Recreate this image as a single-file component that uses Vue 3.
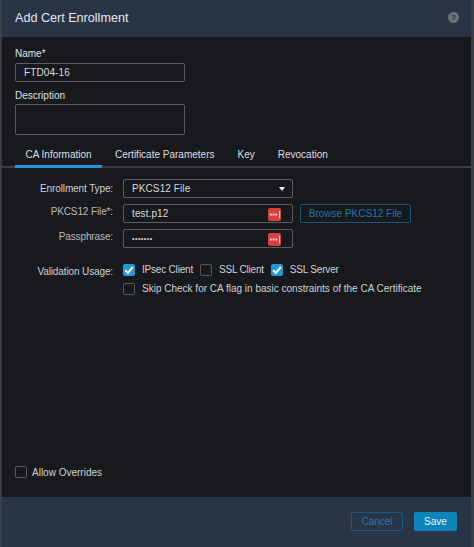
<script setup>
const tabs = ['CA Information', 'Certificate Parameters', 'Key', 'Revocation']
</script>

<template>
  <div class="page">
    <div class="modal">
      <header class="head">
        <span class="title">Add Cert Enrollment</span>
        <span class="help">?</span>
      </header>
      <main class="body">
        <div class="top">
          <label class="lab name-lab">Name*</label>
          <div class="field wide">FTD04-16</div>
          <label class="lab desc-lab">Description</label>
          <div class="field wide area"></div>
        </div>
        <nav class="tabs">
          <span v-for="(t, i) in tabs" :key="t" class="tab" :class="{ on: i === 0 }">{{ t }}</span>
        </nav>
        <section class="form">
          <div class="row r1">
            <span class="rl">Enrollment Type:</span>
            <div class="field ctl">PKCS12 File<span class="caret"></span></div>
          </div>
          <div class="row r2">
            <span class="rl up">PKCS12 File*:</span>
            <div class="field ctl">test.p12
              <span class="dots"><svg width="13" height="13" viewBox="0 0 14 14"><rect x="2" y="6" width="2" height="2" fill="#f6e4e4"/><rect x="5" y="6" width="2" height="2" fill="#f6e4e4"/><rect x="8" y="6" width="2" height="2" fill="#f6e4e4"/><rect x="12" y="3" width="1" height="8" fill="#f6e4e4"/></svg></span>
            </div>
            <button class="browse">Browse PKCS12 File</button>
          </div>
          <div class="row r3">
            <span class="rl up">Passphrase:</span>
            <div class="field ctl pw">•••••••
              <span class="dots"><svg width="13" height="13" viewBox="0 0 14 14"><rect x="2" y="6" width="2" height="2" fill="#f6e4e4"/><rect x="5" y="6" width="2" height="2" fill="#f6e4e4"/><rect x="8" y="6" width="2" height="2" fill="#f6e4e4"/><rect x="12" y="3" width="1" height="8" fill="#f6e4e4"/></svg></span>
            </div>
          </div>
          <div class="row r4">
            <span class="rl down">Validation Usage:</span>
            <div class="checks">
              <span class="box on"><svg width="12" height="12" viewBox="0 0 12 12"><path d="M2.2 6.2 L4.9 9 L9.8 3" fill="none" stroke="#fff" stroke-width="2"/></svg></span><span class="ck tight">IPsec Client</span>
              <span class="box"></span><span class="ck tight">SSL Client</span>
              <span class="box on"><svg width="12" height="12" viewBox="0 0 12 12"><path d="M2.2 6.2 L4.9 9 L9.8 3" fill="none" stroke="#fff" stroke-width="2"/></svg></span><span class="ck last">SSL Server</span>
            </div>
          </div>
          <div class="row r5">
            <span class="rl"></span>
            <div class="checks">
              <span class="box"></span><span class="ck">Skip Check for CA flag in basic constraints of the CA Certificate</span>
            </div>
          </div>
        </section>
        <div class="allow">
          <span class="box"></span><span class="ck">Allow Overrides</span>
        </div>
      </main>
      <footer class="foot">
        <button class="cancel">Cancel</button>
        <button class="save">Save</button>
      </footer>
    </div>
  </div>
</template>

<style>
html, body { margin: 0; background: #3b3e44; }
</style>

<style scoped>
.page {
  width: 474px;
  height: 547px;
  padding: 0 3px 0 2px;
  box-sizing: border-box;
  background: #3b3e44;
  font-family: "Liberation Sans", Arial, sans-serif;
  color: #d6d9dd;
  font-size: 10px;
  overflow: hidden;
}
.modal { height: 100%; display: flex; flex-direction: column; background: #17191d; }
.head {
  height: 37px;
  flex: none;
  box-sizing: border-box;
  background: #2a3447;
  display: flex;
  align-items: center;
  justify-content: space-between;
  padding: 0 12px 2px 13px;
}
.title { font-size: 12.6px; color: #e4e7ea; }
.help {
  width: 11px; height: 11px; border-radius: 50%;
  background: #6c7078; color: #33363c;
  font-size: 8px; font-weight: bold; line-height: 11px; text-align: center;
}
.body { flex: 1; display: flex; flex-direction: column; }
.top { padding: 10px 0 0 13px; }
.lab { display: block; line-height: 14px; color: #dfe2e5; }
.name-lab { margin-bottom: 2px; }
.desc-lab { margin-top: 7px; margin-bottom: 1px; }
.field {
  box-sizing: border-box;
  border: 1px solid #5a5d62;
  border-radius: 2px;
  color: #d6d9dd;
  background: #17191d;
  position: relative;
}
.wide { width: 170px; height: 19px; line-height: 17px; padding-left: 8px; letter-spacing: 0.1px; }
.area { height: 31px; }
.tabs {
  display: flex;
  height: 33px;
  box-sizing: border-box;
  border-bottom: 2px solid #3a3c41;
  padding-left: 13px;
}
.tab {
  height: 33px;
  box-sizing: border-box;
  line-height: 39px;
  color: #dcdfe2;
  margin-right: 23px;
}
.tab.on {
  width: 87px;
  text-align: center;
  margin-right: 13px;
  border-bottom: 3px solid #1d9ad6;
  line-height: 39px;
}
.form { padding-top: 11px; }
.row { display: flex; align-items: center; }
.r1, .r2, .r3 { height: 19px; margin-bottom: 6px; }
.rl {
  width: 111px; text-align: right; margin-right: 10px; color: #b9bcc1; flex: none;
  letter-spacing: -0.12px;
}
.r1 .rl, .r4 .rl { color: #cfd2d6; }
.up { padding-bottom: 4px; box-sizing: border-box; }
.down { padding-top: 4px; box-sizing: border-box; }
.ctl {
  width: 170px; height: 19px; line-height: 17px; padding-left: 8px;
  letter-spacing: 0.1px;
}
.pw { font-size: 7px; letter-spacing: 0.5px; }
.caret {
  position: absolute; right: 7px; top: 7px;
  border-left: 3px solid transparent; border-right: 3px solid transparent;
  border-top: 4px solid #eceef0;
}
.dots {
  position: absolute; right: 11px; top: 3px;
  width: 13px; height: 13px;
  background: #d93f3c;
  border-radius: 2px;
  display: block;
}
.dots svg { display: block; }
.browse {
  margin-left: 7px;
  width: 111px; height: 19px; padding: 0;
  background: transparent;
  border: 1px solid #155a78;
  border-radius: 2px;
  color: #1f7aa3;
  font: inherit;
}
.r4 { margin-top: 12px; height: 19px; }
.r5 { height: 19px; }
.checks { display: flex; align-items: center; }
.box {
  width: 12px; height: 12px; flex: none; box-sizing: border-box;
  border: 1px solid #55585d; border-radius: 2px;
  margin-right: 7px;
  display: block;
}
.box.on { background: #1e9bd8; border-color: #1e9bd8; }
.box.on svg { display: block; margin: -1px; }
.ck { color: #cfd2d6; }
.tight { letter-spacing: -0.2px; margin-right: 7px; }
.last { letter-spacing: -0.2px; }
.allow { margin-top: auto; padding: 0 0 19px 13px; display: flex; align-items: center; }
.allow .box { margin-right: 5px; }
.foot {
  height: 50px;
  flex: none;
  box-sizing: border-box;
  background: #2a3447;
  display: flex;
  align-items: center;
  justify-content: flex-end;
  padding: 0 14px 1px 0;
  gap: 11px;
}
.foot button { height: 19px; padding: 0; border-radius: 2px; font: inherit; }
.cancel { width: 52px; background: transparent; border: 1px solid #1a5a80; color: #2a7aa5; }
.save { width: 43px; background: #0d85bb; border: 0; color: #e6f2f8; font-weight: bold; }
</style>
